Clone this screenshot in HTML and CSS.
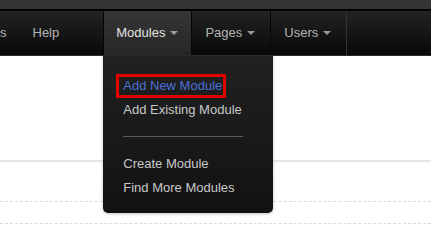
FILE: index.html
```html
<!DOCTYPE html>
<html lang="en">
<head>
    <meta charset="UTF-8">
    <meta name="viewport" content="width=device-width, initial-scale=1.0">
    <title>Control Panel</title>
    <link rel="stylesheet" href="styles.css">
</head>
<body>

<div class="top-strip"></div>

<div class="navbar">
    <ul class="nav">
        <li class="nav-item first"><a href="#">s</a></li>
        <li class="nav-item help"><a href="#">Help</a></li>
        <li class="nav-item menu active">
            <a href="#">Modules <span class="caret"></span></a>
            <ul class="dropdown">
                <li><a href="#" class="selected">Add New Module</a></li>
                <li><a href="#">Add Existing Module</a></li>
                <li class="divider"></li>
                <li><a href="#">Create Module</a></li>
                <li><a href="#">Find More Modules</a></li>
            </ul>
        </li>
        <li class="nav-item menu wide"><a href="#">Pages <span class="caret"></span></a></li>
        <li class="nav-item menu wide last"><a href="#">Users <span class="caret"></span></a></li>
    </ul>
</div>

<div class="content">
    <div class="rule"></div>
    <div class="dashed one"></div>
    <div class="dashed two"></div>
</div>

</body>
</html>
```

FILE: styles.css
```css
/* Base */
body {
    margin: 0;
    font-family: "Liberation Sans", Arial, sans-serif;
    font-size: 13px;
    background-color: #ffffff;
    overflow: hidden;
}

ul {
    list-style: none;
    margin: 0;
    padding: 0;
}

a {
    text-decoration: none;
}

.top-strip {
    height: 9px;
    background-color: #343434;
}

/* Navbar */
.navbar {
    height: 44px;
    border-top: 2px solid #020202;
    background: linear-gradient(to bottom, #232323, #080808);
    border-bottom: 1px solid #2c2c2c;
}

.nav {
    display: flex;
    height: 100%;
}

.nav-item {
    position: relative;
    height: 100%;
}

.nav-item > a {
    display: flex;
    align-items: center;
    box-sizing: border-box;
    height: 100%;
    padding: 0 13px 2px 12px;
    color: #b4b4b4;
}

.nav-item.first > a {
    padding-left: 0;
    padding-right: 14px;
}

.nav-item.help > a {
    padding: 0 44px 2px 12px;
}

.nav-item.wide > a {
    padding: 0 15px 2px 13px;
}

.nav-item.menu {
    border-left: 1px solid #050505;
}

.nav-item.last {
    border-right: 1px solid #333;
}

.nav-item.active {
    background: linear-gradient(to bottom, #363636, #262626);
}

.nav-item.active > a {
    color: #e2e2e2;
}

.caret {
    display: inline-block;
    margin-left: 5px;
    margin-top: 2px;
    border-top: 4px solid #9a9a9a;
    border-left: 4px solid transparent;
    border-right: 4px solid transparent;
}

/* Dropdown */
.dropdown {
    position: absolute;
    top: 45px;
    left: -1px;
    width: 170px;
    height: 157px;
    box-sizing: border-box;
    padding: 18px 0 12px 20px;
    background: linear-gradient(to bottom, #212121, #121212);
    border-radius: 0 0 5px 5px;
    box-shadow: 0 1px 3px rgba(0, 0, 0, 0.25);
    z-index: 10;
}

.dropdown li a {
    display: block;
    line-height: 24px;
    color: #c8c8c8;
}

.dropdown li a.selected {
    display: inline-block;
    line-height: 18px;
    margin-left: -7px;
    padding: 0 1px 0 4px;
    border: 3px solid #e00000;
    color: #4c70d6;
}

.dropdown .divider {
    height: 1px;
    margin: 14px 30px 15px 0;
    background-color: #5a5a5a;
}

/* Page content */
.content {
    padding-top: 104px;
}

.rule {
    height: 2px;
    background-color: #e6e6e6;
}

.dashed {
    border-top: 1px dashed #dcdcdc;
}

.dashed.one {
    margin-top: 39px;
}

.dashed.two {
    margin-top: 21px;
}
```
